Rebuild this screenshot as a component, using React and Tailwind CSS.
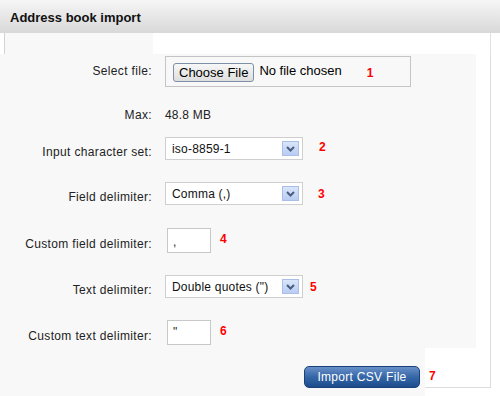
import React from "react";

const Chevron = () => (
    <svg width="9" height="6" viewBox="0 0 9 6">
        <path d="M1 1 L4.5 4.5 L8 1" fill="none" stroke="#4a5d80" strokeWidth="2" />
    </svg>
);

const FakeSelect = ({ value }) => (
    <div className="w-[138px] h-[23px] bg-white border border-[#cfcfcf] flex items-center justify-between pl-[6px] pr-[3px] text-[12px] text-[#111]">
        <span className="tracking-[0.2px]">{value}</span>
        <span className="w-[17px] h-[15px] bg-gradient-to-b from-[#d9e5fa] to-[#b9cdf2] border border-[#a9bfe8] flex items-center justify-center">
            <Chevron />
        </span>
    </div>
);

const Num = ({ n, ml }) => (
    <span className={`text-[#ff0000] font-bold text-[12px] ${ml}`}>{n}</span>
);

const Label = ({ children }) => (
    <div className="w-[152px] shrink-0 text-right pt-[6px] tracking-[0.35px] text-[#222]">{children}</div>
);

const App = () => {
    return (
        <div className="w-[500px] h-[396px] bg-white overflow-hidden font-['Liberation_Sans',Arial,sans-serif] text-[12px]">
            {/* header */}
            <div className="h-[33px] bg-gradient-to-b from-[#f6f6f6] to-[#d8d8d8] pl-[10px] pt-[2px] flex items-center font-bold text-[13px] text-[#111]">
                Address book import
            </div>

            {/* thin strip under the header */}
            <div className="flex h-[21px]">
                <div className="w-[4px]"></div>
                <div className="w-[149px] bg-[#f8f8f8] border-l border-[#d4d4d4]"></div>
                <div className="w-[338px] bg-white border-r border-[#e2e2e2]"></div>
            </div>

            <div className="flex">
                {/* main gray panel with the form */}
                <div className="w-[425px] h-[342px] bg-[#f8f8f8] shrink-0">
                    {/* select file */}
                    <div className="flex mt-[2px] h-[31px]">
                        <Label>Select file:</Label>
                        <div className="ml-[13px] w-[246px] h-[31px] border border-[#c4c4c4] flex items-start pt-[6px] pl-[7px]">
                            <button className="h-[19px] px-[5px] bg-gradient-to-b from-[#f7f7f7] to-[#dedede] border border-[#7d8ea8] rounded-[3px] text-[13px] leading-none text-black">
                                Choose File
                            </button>
                            <span className="ml-[5px] text-[13px] leading-[15px] text-black">No file chosen</span>
                            <Num n="1" ml="ml-[25px] mt-[1px]" />
                        </div>
                    </div>

                    {/* max */}
                    <div className="flex mt-[18px] h-[20px] items-center">
                        <div className="w-[152px] text-right tracking-[0.35px] text-[#222]">Max:</div>
                        <div className="ml-[13px] tracking-[0.2px] text-[#222]">48.8 MB</div>
                    </div>

                    {/* charset */}
                    <div className="flex mt-[12px] h-[23px] items-center">
                        <Label>Input character set:</Label>
                        <div className="ml-[13px]"><FakeSelect value="iso-8859-1" /></div>
                        <Num n="2" ml="ml-[16px] -mt-[4px]" />
                    </div>

                    {/* field delimiter */}
                    <div className="flex mt-[22px] h-[23px] items-center">
                        <Label>Field delimiter:</Label>
                        <div className="ml-[13px]"><FakeSelect value="Comma (,)" /></div>
                        <Num n="3" ml="ml-[15px]" />
                    </div>

                    {/* custom field delimiter */}
                    <div className="flex mt-[23px] h-[25px] items-center">
                        <Label>Custom field delimiter:</Label>
                        <div className="ml-[15px] w-[44px] h-[25px] bg-white border border-[#c8c8c8] pl-[5px] pt-[4px] text-[12px] text-[#222]">,</div>
                        <Num n="4" ml="ml-[9px] -mt-[3px]" />
                    </div>

                    {/* text delimiter */}
                    <div className="flex mt-[22px] h-[23px] items-center">
                        <Label>Text delimiter:</Label>
                        <div className="ml-[13px]"><FakeSelect value={'Double quotes (")'} /></div>
                        <Num n="5" ml="ml-[7px]" />
                    </div>

                    {/* custom text delimiter */}
                    <div className="flex mt-[22px] h-[25px] items-center">
                        <Label>Custom text delimiter:</Label>
                        <div className="ml-[15px] w-[44px] h-[25px] bg-white border border-[#c8c8c8] pl-[5px] pt-[2px] text-[12px] text-[#222]">"</div>
                        <Num n="6" ml="ml-[9px] -mt-[3px]" />
                    </div>

                    {/* submit */}
                    <div className="flex justify-end pr-[5px] mt-[21px]">
                        <button className="w-[116px] h-[22px] rounded-[5px] border border-[#1b4278] bg-gradient-to-b from-[#6990c8] via-[#3567a8] to-[#1d4c8c] text-white text-[12px] tracking-[0.3px]">
                            Import CSV File
                        </button>
                    </div>
                </div>

                {/* right side: rest of the panel, then the number 7 */}
                <div className="w-[51px] shrink-0 flex flex-col">
                    <div className="h-[294px] bg-[#f8f8f8]"></div>
                    <div className="h-[40px] bg-white border-b border-[#dcdcdc] pl-[4px] pt-[19px]">
                        <Num n="7" ml="" />
                    </div>
                </div>
                <div className="w-[15px] h-[334px] bg-white border-r border-b border-[#dcdcdc] shrink-0"></div>
            </div>
        </div>
    );
};

export default App;
